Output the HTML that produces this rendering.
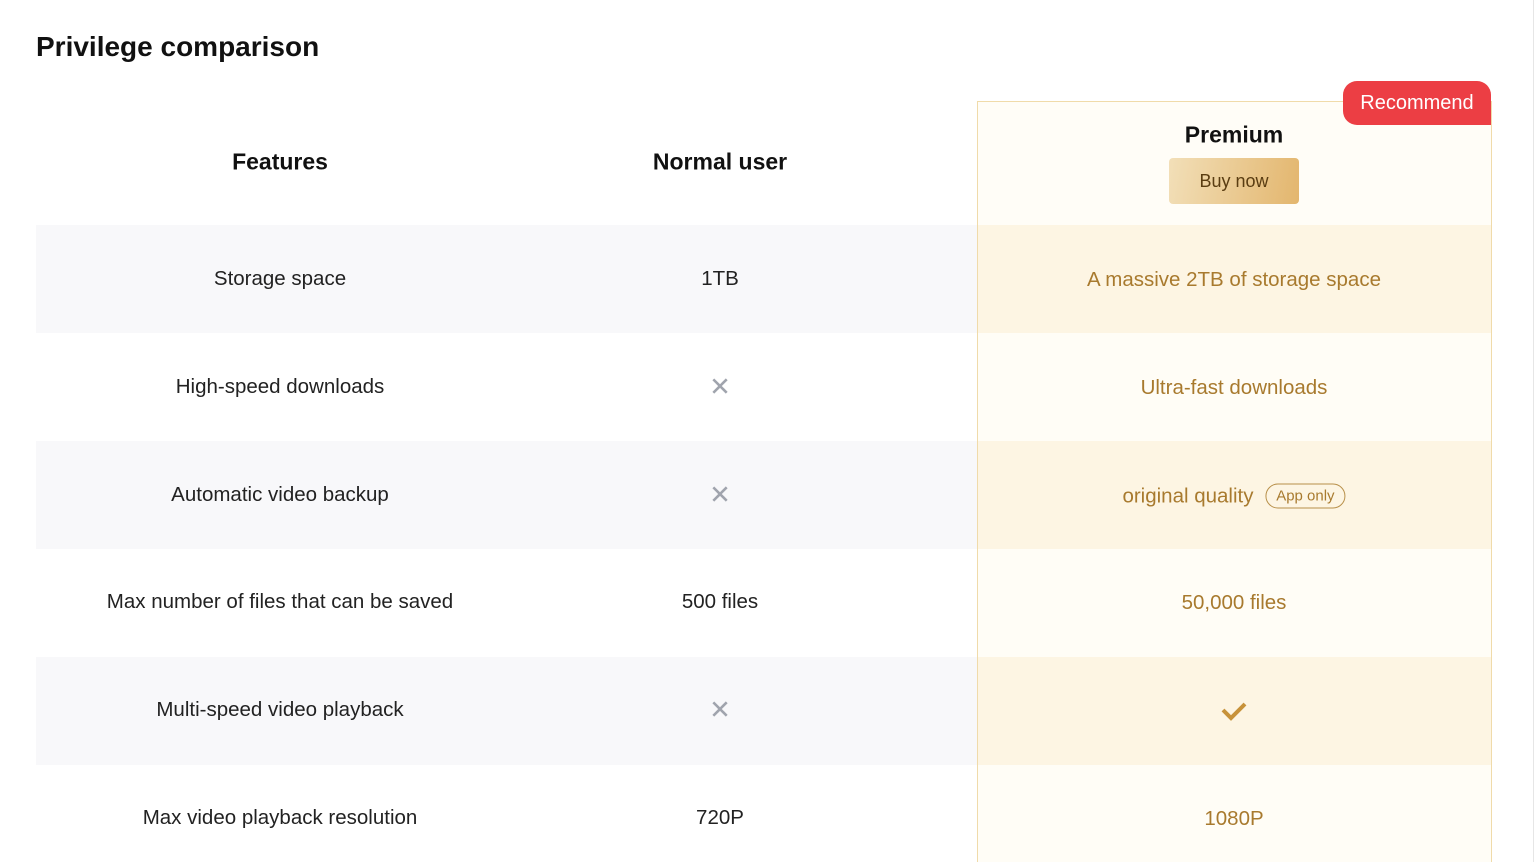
<!DOCTYPE html>
<html><head><meta charset="utf-8"><style>
html,body{margin:0;width:1536px;height:862px;overflow:hidden;background:#fff;font-family:"Liberation Sans",Arial,sans-serif;position:relative}
h1{position:absolute;left:36px;top:31px;margin:0;font-size:28px;font-weight:bold;color:#111}
.row{position:absolute;left:36px;width:941px;height:108px}
.g{background:#f8f8fa}
.p{position:absolute;left:977px;width:514px;height:108px}
.po{background:#fdf5e3}.pe{background:#fffdf6}
.t{position:absolute;transform:translate(-50%,-50%);font-size:20.5px;color:#222;white-space:nowrap}
.gold{color:#a87a2e}
.x{color:#a0a4ad;font-size:26px}
</style></head><body>
<h1>Privilege comparison</h1>
<div style="position:absolute;left:977px;top:102px;width:514px;height:123px;background:#fffdf7"></div>
<div class="row g" style="top:225px"></div>
<div class="row g" style="top:441px"></div>
<div class="row g" style="top:657px"></div>
<div class="p po" style="top:225px"></div>
<div class="p pe" style="top:333px"></div>
<div class="p po" style="top:441px"></div>
<div class="p pe" style="top:549px"></div>
<div class="p po" style="top:657px"></div>
<div class="p pe" style="top:765px"></div>
<div style="position:absolute;left:977px;top:101px;width:515px;height:780px;border:1px solid #f0dbaa;box-sizing:border-box"></div>
<div style="position:absolute;left:1343px;top:81px;width:148px;height:44px;background:#ec3e44;border-radius:14px 14px 0 14px;color:#fff;font-size:20px;line-height:44px;text-align:center">Recommend</div>
<div style="position:absolute;left:1533px;top:0;width:1px;height:862px;background:#e6e6e6"></div>
<div class="t" style="left:280px;top:162px;font-weight:bold;font-size:23px;color:#111">Features</div>
<div class="t" style="left:720px;top:162px;font-weight:bold;font-size:23px;color:#111">Normal user</div>
<div class="t" style="left:1234px;top:135px;font-weight:bold;font-size:23px;color:#111">Premium</div>
<div style="position:absolute;left:1169px;top:158px;width:130px;height:46px;border-radius:4px;background:linear-gradient(100deg,#f2dfb8,#e3b66e);color:#5a3d12;font-size:18px;line-height:46px;text-align:center">Buy now</div>
<div class="t" style="left:280px;top:279px">Storage space</div>
<div class="t" style="left:720px;top:279px">1TB</div>
<div class="t gold" style="left:1234px;top:280px">A massive 2TB of storage space</div>
<div class="t" style="left:280px;top:387px">High-speed downloads</div>
<div class="t x" style="left:720px;top:387px">✕</div>
<div class="t gold" style="left:1234px;top:388px">Ultra-fast downloads</div>
<div class="t" style="left:280px;top:495px">Automatic video backup</div>
<div class="t x" style="left:720px;top:495px">✕</div>
<div class="t gold" style="left:1234px;top:496px">original quality <span style="display:inline-block;margin-left:6px;border:1.5px solid #b8904a;border-radius:13px;padding:3px 10px;font-size:15px;vertical-align:2px">App only</span></div>
<div class="t" style="left:280px;top:602px">Max number of files that can be saved</div>
<div class="t" style="left:720px;top:602px">500 files</div>
<div class="t gold" style="left:1234px;top:603px">50,000 files</div>
<div class="t" style="left:280px;top:710px">Multi-speed video playback</div>
<div class="t x" style="left:720px;top:710px">✕</div>
<svg style="position:absolute;left:1220px;top:700px" width="28" height="22" viewBox="0 0 28 22"><path d="M3 10 L11 18 L25 4" fill="none" stroke="#c7923a" stroke-width="4"/></svg>
<div class="t" style="left:280px;top:818px">Max video playback resolution</div>
<div class="t" style="left:720px;top:818px">720P</div>
<div class="t gold" style="left:1234px;top:819px">1080P</div>
</body></html>
